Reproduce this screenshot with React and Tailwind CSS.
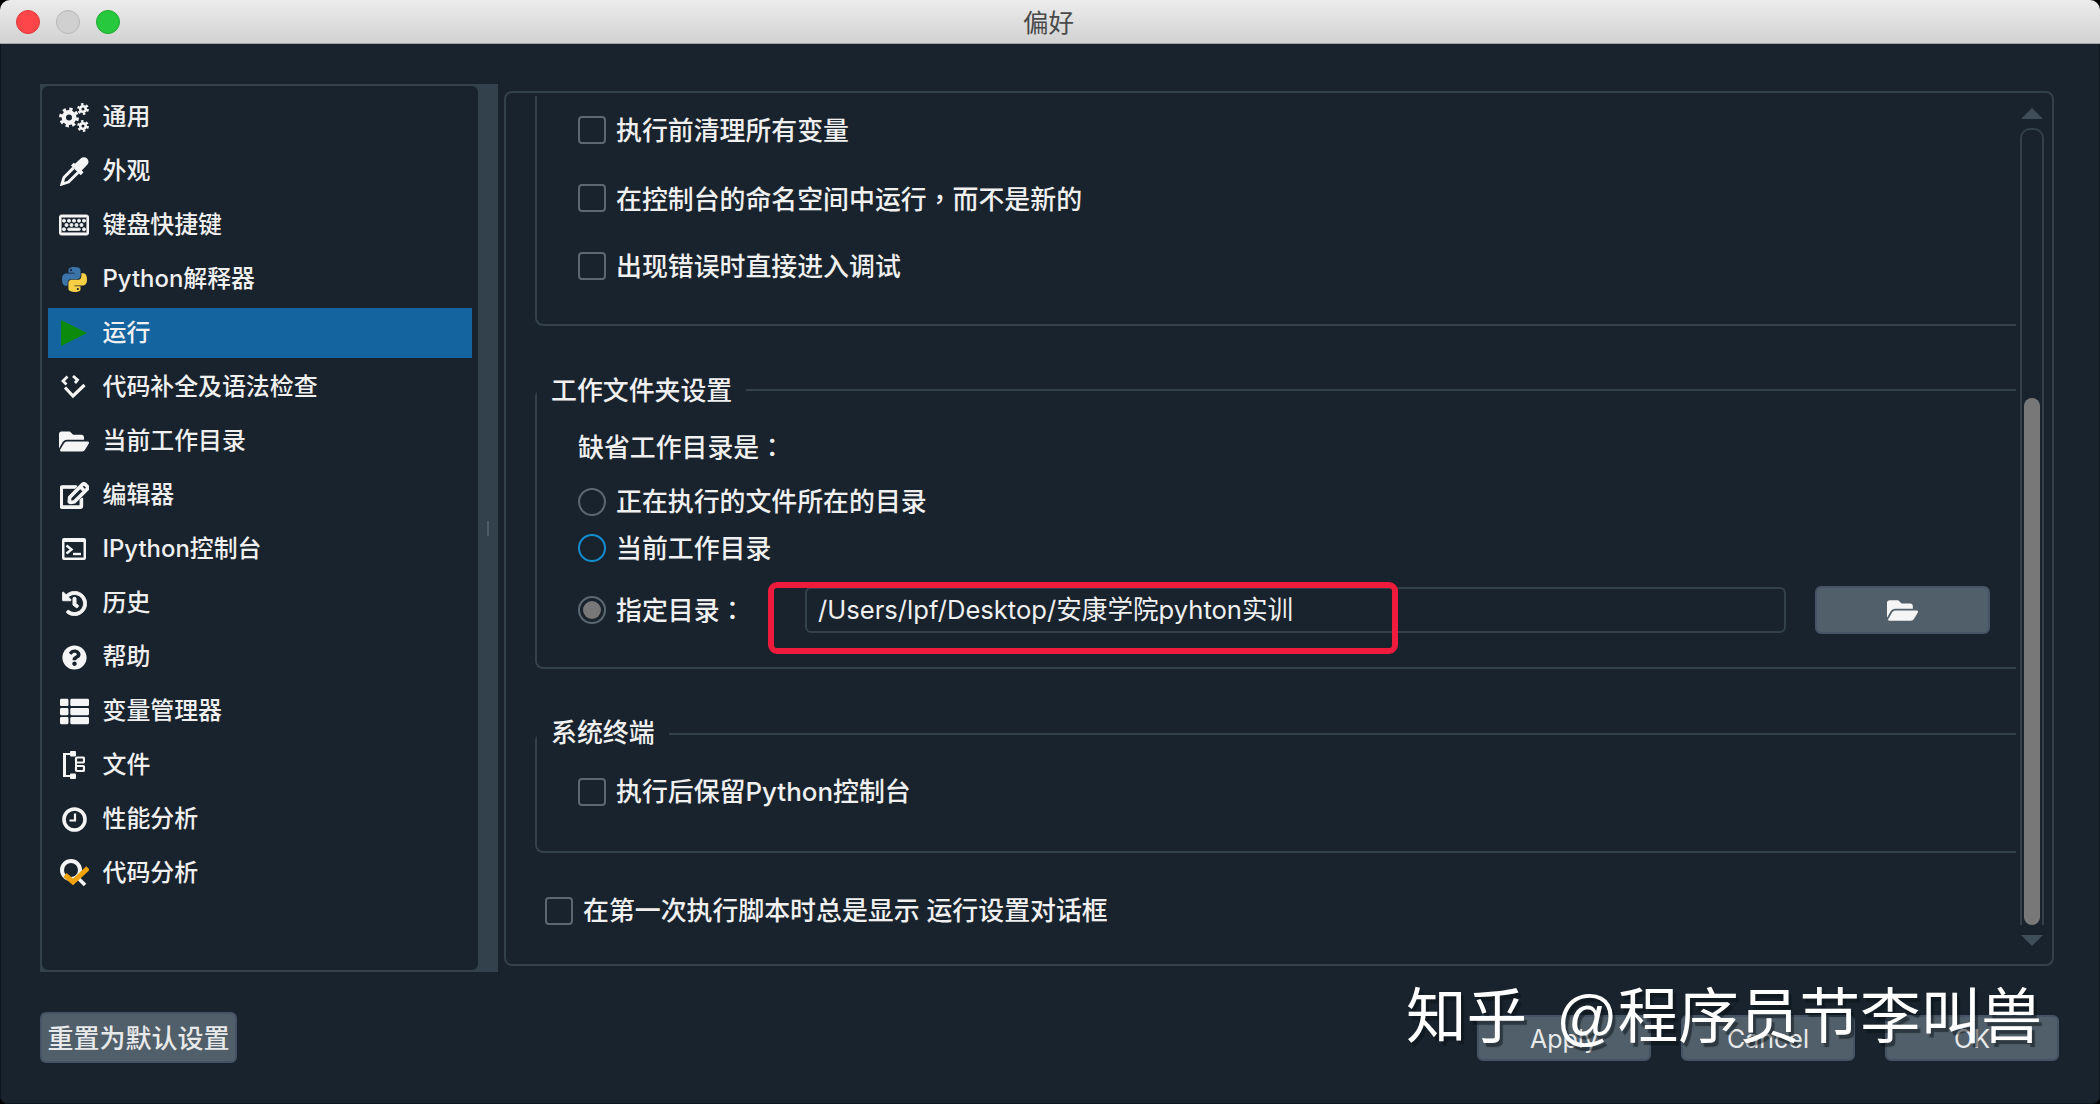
import React from "react";
import { FaRegKeyboard, FaFolderOpen, FaRegEdit, FaHistory, FaQuestionCircle, FaThList } from "react-icons/fa";

const W = "#f5f5f5";
const pyPath = "M54.9 0C26.8 0 28.6 12.2 28.6 12.2v12.6h26.8v3.8H17.9S0 26.6 0 54.9c0 28.3 15.6 27.3 15.6 27.3h9.3V69s-.5-15.6 15.4-15.6h26.5s14.9.2 14.9-14.4V14.9S84 0 54.9 0zM40.1 8.5a4.8 4.8 0 110 9.6 4.8 4.8 0 010-9.6z";
const Gears = () => (
  <svg viewBox="0 0 30 29" width="30" height="29" fill="none" stroke={W}>
    <circle cx="10" cy="14.5" r="5.2" strokeWidth="4.4" />
    <circle cx="10" cy="14.5" r="8.4" strokeWidth="3" strokeDasharray="3.3 3.3" />
    <circle cx="24" cy="6" r="2.8" strokeWidth="2.6" />
    <circle cx="24" cy="6" r="4.9" strokeWidth="2" strokeDasharray="2.56 2.56" />
    <circle cx="24" cy="23" r="2.8" strokeWidth="2.6" />
    <circle cx="24" cy="23" r="4.9" strokeWidth="2" strokeDasharray="2.56 2.56" />
  </svg>
);
const Python = () => (
  <svg viewBox="0 0 110 110" width="25" height="25">
    <path fill="#3a74a8" d={pyPath} />
    <path fill="#f7cf45" transform="rotate(180 55 55)" d={pyPath} />
  </svg>
);
const Dropper = () => (
  <svg viewBox="0 0 28 28" width="29" height="29">
    <path fill={W} d="M14.5 6.5 20 1.5a4.3 4.3 0 0 1 6.3 6L21 13l1.8 1.8-2.8 2.8L10.6 8.2l2.6-2.6z" />
    <path fill="none" stroke={W} strokeWidth="2.8" d="M13 10.5 3.8 19.8 1.8 26.2 8.2 24.2 17.5 15" />
  </svg>
);
const Play = () => (
  <svg viewBox="0 0 24 24" width="26" height="26"><path fill="#0b8a0b" d="M0 0 24 12 0 24z" /></svg>
);
const CodeCheck = () => (
  <svg viewBox="0 0 26 24" width="26" height="24" fill="none" stroke={W} strokeWidth="2.8">
    <path d="M6.5 1.5 2 6l3.5 3.5" />
    <path d="M12 1 16.5 5 14 8" />
    <path d="M4 12.5 12 21 23.5 10" strokeWidth="3.2" />
  </svg>
);
const Terminal = () => (
  <svg viewBox="0 0 24 22" width="24" height="22">
    <rect width="24" height="22" rx="2" fill={W} />
    <rect x="2.5" y="4" width="19" height="15.5" fill="#19232d" />
    <path d="M4.5 7.5l5 4-5 4" fill="none" stroke={W} strokeWidth="2.4" />
    <path d="M11 16h8" stroke={W} strokeWidth="2.4" />
  </svg>
);
const Tree = () => (
  <svg viewBox="0 0 22 28" width="22" height="28" fill={W}>
    <path d="M1.5 2v24" stroke={W} strokeWidth="3" />
    <path d="M1 3h7M1 25h7" stroke={W} strokeWidth="2" />
    <rect x="7" y="0" width="6" height="5.5" rx="1" />
    <rect x="7" y="22.5" width="6" height="5.5" rx="1" />
    <path d="M13 7v13" stroke={W} strokeWidth="2" />
    <rect x="13" y="6.5" width="8" height="5" rx="1" fill="#19232d" stroke={W} strokeWidth="2.2" />
    <rect x="13" y="15" width="8" height="5" rx="1" fill="#19232d" stroke={W} strokeWidth="2.2" />
  </svg>
);
const Clock = () => (
  <svg viewBox="0 0 25 25" width="25" height="25" fill="none" stroke={W}>
    <circle cx="12.5" cy="12.5" r="10.5" strokeWidth="3.6" />
    <path d="M13 6.5v7H7.5" strokeWidth="2.2" />
  </svg>
);
const QCheck = () => (
  <svg viewBox="0 0 30 28" width="30" height="28" fill="none">
    <circle cx="12" cy="11" r="9" stroke={W} strokeWidth="4" />
    <path d="M18 18l8 8" stroke={W} strokeWidth="3.5" />
    <path d="M6 16l8 7L29 9" stroke="#f0a30a" strokeWidth="5" />
  </svg>
);

const items = [
  ["通用", <Gears />],
  ["外观", <Dropper />],
  ["键盘快捷键", <FaRegKeyboard size={32} color={W} stroke={W} strokeWidth={18} />],
  ["Python解释器", <Python />],
  ["运行", <Play />],
  ["代码补全及语法检查", <CodeCheck />],
  ["当前工作目录", <FaFolderOpen size={31} color={W} />],
  ["编辑器", <FaRegEdit size={29} color={W} stroke={W} strokeWidth={24} />],
  ["IPython控制台", <Terminal />],
  ["历史", <FaHistory size={25} color={W} stroke={W} strokeWidth={18} />],
  ["帮助", <FaQuestionCircle size={25} color={W} />],
  ["变量管理器", <FaThList size={29} color={W} />],
  ["文件", <Tree />],
  ["性能分析", <Clock />],
  ["代码分析", <QCheck />],
];

const P = ({ children }) => <span className="font-['Noto_Sans_CJK_TC',sans-serif]">{children}</span>;
const Checkbox = () => <span className="w-[28px] h-[28px] shrink-0 rounded-[4px] border-2 border-[#5b6872]" />;
const CheckRow = ({ children, className = "", textClass = "" }) => (
  <div className={`flex items-center h-[36px] gap-[10px] ${className}`}>
    <Checkbox />
    <span className={textClass}>{children}</span>
  </div>
);
const Radio = ({ tone = "border-[#5b6872]", on }) => (
  <span className={`w-[28px] h-[28px] shrink-0 rounded-full border-2 ${tone} flex items-center justify-center`}>
    {on && <span className="w-[18px] h-[18px] rounded-full bg-[#787878]" />}
  </span>
);
const Btn = ({ children, className = "" }) => (
  <button className={`rounded-[6px] bg-[#505f69] border-2 border-[#455364] text-[#e8e9ea] flex items-center justify-center ${className}`}>
    {children}
  </button>
);
const Triangle = ({ down }) => (
  <svg viewBox="0 0 22 11" width="22" height="11" className="shrink-0">
    <path fill="#3f4d58" d={down ? "M0 0h22L11 11z" : "M11 0l11 11H0z"} />
  </svg>
);

export default function App() {
  return (
    <div className="w-[2100px] h-[1104px] bg-black relative overflow-hidden font-[Inter,'Noto_Sans_CJK_SC',sans-serif]">
      <div className="w-full h-full flex flex-col bg-[#19232d] rounded-t-[10px] rounded-b-[8px] overflow-hidden shadow-[inset_0_0_0_1px_#10171e]">
        <div className="h-[44px] shrink-0 flex items-center relative bg-gradient-to-b from-[#ececec] to-[#d2d2d2] border-b border-[#a6a6a6]">
          <div className="flex items-center gap-[16px] pl-[16px]">
            <span className="w-[24px] h-[24px] rounded-full bg-[#fc4649] border border-[#e0383b]" />
            <span className="w-[24px] h-[24px] rounded-full bg-[#d0d0d0] border border-[#b8b8b8]" />
            <span className="w-[24px] h-[24px] rounded-full bg-[#28c83e] border border-[#1ea92f]" />
          </div>
          <span className="absolute left-[1023px] top-[7px] text-[25.5px] leading-[32px] text-[#4a4a4a]">偏好</span>
        </div>

        <div className="flex-1 flex flex-col pl-[40px] pr-[41px] text-[#f0f0f0]">
          <div className="flex items-start mt-[40px]">
            {/* sidebar */}
            <div className="w-[458px] h-[888px] bg-[#32414b] pl-[2px] py-[2px] flex shrink-0">
              <div className="w-[436px] h-full bg-[#19232d] rounded-[6px] pt-[4px] px-[6px] text-[23.9px] font-medium">
                {items.map(([label, icon], i) => (
                  <div key={label} className="h-[54px] py-[2px]">
                    <div className={`h-[50px] flex items-center pl-[11px] ${i === 4 ? "bg-[#1464a0]" : ""}`}>
                      <span className="w-[30px] h-[30px] flex items-center justify-center shrink-0">{icon}</span>
                      <span className="ml-[13.5px] leading-[30px] whitespace-nowrap">{label}</span>
                    </div>
                  </div>
                ))}
              </div>
              <div className="flex-1 flex items-center justify-center">
                <span className="w-[2px] h-[15px] bg-[#4d5c67]" />
              </div>
            </div>

            {/* content panel */}
            <div className="ml-[6px] mt-[7px] w-[1550px] h-[875px] border-2 border-[#32414b] rounded-[8px] flex text-[25.9px] font-medium">
              <div className="w-[1510px] pl-[29px] pt-[3px] shrink-0">
                <div className="h-[230px] border-l-2 border-b-2 border-[#32414b] rounded-bl-[8px] pl-[41px] pt-[16px] flex flex-col gap-[32px]">
                  <CheckRow textClass="pt-[2px]">执行前清理所有变量</CheckRow>
                  <CheckRow textClass="pt-[2px]">在控制台的命名空间中运行<P>，</P>而不是新的</CheckRow>
                  <CheckRow textClass="pt-[2px]">出现错误时直接进入调试</CheckRow>
                </div>

                <fieldset className="mt-[46px] border-t-2 border-l-2 border-b-2 border-[#32414b] rounded-l-[8px] pl-[41px] pb-[33px]">
                  <legend className="ml-[-41px] px-[14px] h-[36px] leading-[38px]">工作文件夹设置</legend>
                  <div className="h-[36px] leading-[36px] mt-[20px]">缺省工作目录是<P>：</P></div>
                  <div className="flex items-center h-[36px] gap-[10px] mt-[20px]"><Radio /><span>正在执行的文件所在的目录</span></div>
                  <div className="flex items-center h-[36px] gap-[10px] mt-[10px]"><Radio tone="border-[#148cd2]" /><span className="pt-[2px]">当前工作目录</span></div>
                  <div className="flex items-center h-[48px] mt-[20px]">
                    <Radio on />
                    <span className="ml-[10px] w-[189px] shrink-0">指定目录<P>：</P></span>
                    <div className="w-[981px] h-[46px] border-2 border-[#32414b] rounded-[6px] flex items-center pl-[11px] whitespace-nowrap font-normal text-[25.6px]">/Users/lpf/Desktop/安康学院pyhton实训</div>
                    <Btn className="ml-[29px] w-[175px] h-[48px]"><FaFolderOpen size={31} color={W} /></Btn>
                  </div>
                </fieldset>

                <fieldset className="mt-[47px] border-t-2 border-l-2 border-b-2 border-[#32414b] rounded-l-[8px] pl-[41px] pb-[41px]">
                  <legend className="ml-[-41px] px-[14px] h-[36px] leading-[34px]">系统终端</legend>
                  <CheckRow className="mt-[22px]">执行后保留Python控制台</CheckRow>
                </fieldset>

                <CheckRow className="mt-[40px] ml-[10px]">在第一次执行脚本时总是显示 运行设置对话框</CheckRow>
              </div>

              <div className="ml-[4px] w-[24px] pt-[15px] flex flex-col items-center">
                <Triangle />
                <div className="mt-[9px] w-[24px] h-[797px] border-x-2 border-t-2 border-[#32414b] rounded-t-[10px] flex flex-col justify-end items-center">
                  <div className="w-[16px] h-[527px] bg-[#787878] rounded-[8px]" />
                </div>
                <div className="mt-[10px] flex"><Triangle down /></div>
              </div>
            </div>
          </div>

          <div className="mt-[40px] h-[51px] flex items-center justify-between">
            <Btn className="w-[197px] h-[51px] text-[26px] font-medium whitespace-nowrap pt-[2px]">重置为默认设置</Btn>
            <div className="flex gap-[30px] text-[25px]">
              <Btn className="w-[174px] h-[46px] pt-[4px]">Apply</Btn>
              <Btn className="w-[174px] h-[46px] pt-[4px]">Cancel</Btn>
              <Btn className="w-[174px] h-[46px] pt-[4px]">OK</Btn>
            </div>
          </div>
        </div>
      </div>

      {/* highlight annotation */}
      <div className="absolute left-[768px] top-[582px] w-[630px] h-[72px] border-[6px] border-[#ef1b3c] rounded-[9px]" />
      {/* watermark */}
      <div className="absolute left-[1406px] top-[968px] text-[60.6px] leading-[88px] text-white whitespace-pre font-['Noto_Sans_CJK_SC',sans-serif] [text-shadow:3px_4px_1px_rgba(10,16,22,0.5)]">知乎<span className="ml-[29px] font-['Liberation_Sans',sans-serif]">@</span>程序员节李叫兽</div>
    </div>
  );
}
